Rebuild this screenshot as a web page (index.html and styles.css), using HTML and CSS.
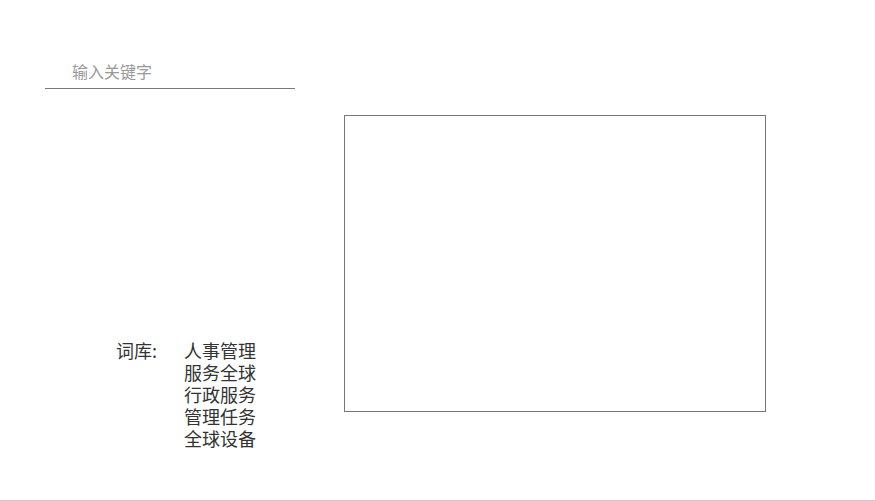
FILE: index.html
```html
<!DOCTYPE html>
<html lang="zh-CN">
<head>
<meta charset="utf-8">
<title>词库</title>
<link rel="stylesheet" href="styles.css">
</head>
<body>
<div class="page">
  <div class="sidebar">
    <input class="search" type="text" placeholder="输入关键字">
    <div class="lexicon">
      <div class="lexicon-label">词库:</div>
      <ul class="lexicon-list">
        <li>人事管理</li>
        <li>服务全球</li>
        <li>行政服务</li>
        <li>管理任务</li>
        <li>全球设备</li>
      </ul>
    </div>
  </div>
  <div class="content">
    <div class="canvas"></div>
  </div>
</div>
<div class="footer"></div>
</body>
</html>
```

FILE: styles.css
```css
html, body {
  margin: 0;
  padding: 0;
  background: #fff;
}
body {
  font-family: "Noto Sans CJK SC", "Noto Sans", sans-serif;
  color: #333;
  overflow: hidden;
}
.page {
  display: flex;
  height: 500px;
}
.sidebar {
  width: 344px;
  flex: none;
  box-sizing: border-box;
  padding: 57px 0 0 45px;
}
.search {
  display: block;
  box-sizing: border-box;
  width: 250px;
  height: 32px;
  margin: 0;
  padding: 0 0 3px 27px;
  border: none;
  border-bottom: 1px solid #7a7a7a;
  outline: none;
  font-family: "Noto Sans CJK SC", sans-serif;
  font-size: 16px;
  color: #333;
  background: transparent;
}
.search::placeholder {
  color: #999;
}
.lexicon {
  display: flex;
  margin-top: 250px;
  margin-left: 71px;
  font-size: 18px;
  line-height: 22px;
}
.lexicon-label {
  width: 68px;
  flex: none;
}
.lexicon-list {
  list-style: none;
  margin: 0;
  padding: 0;
}
.content {
  flex: none;
  padding-top: 115px;
}
.canvas {
  box-sizing: border-box;
  width: 422px;
  height: 297px;
  border: 1px solid #777;
}
.footer {
  height: 0;
  border-top: 1px solid #c8c8c8;
}
```
